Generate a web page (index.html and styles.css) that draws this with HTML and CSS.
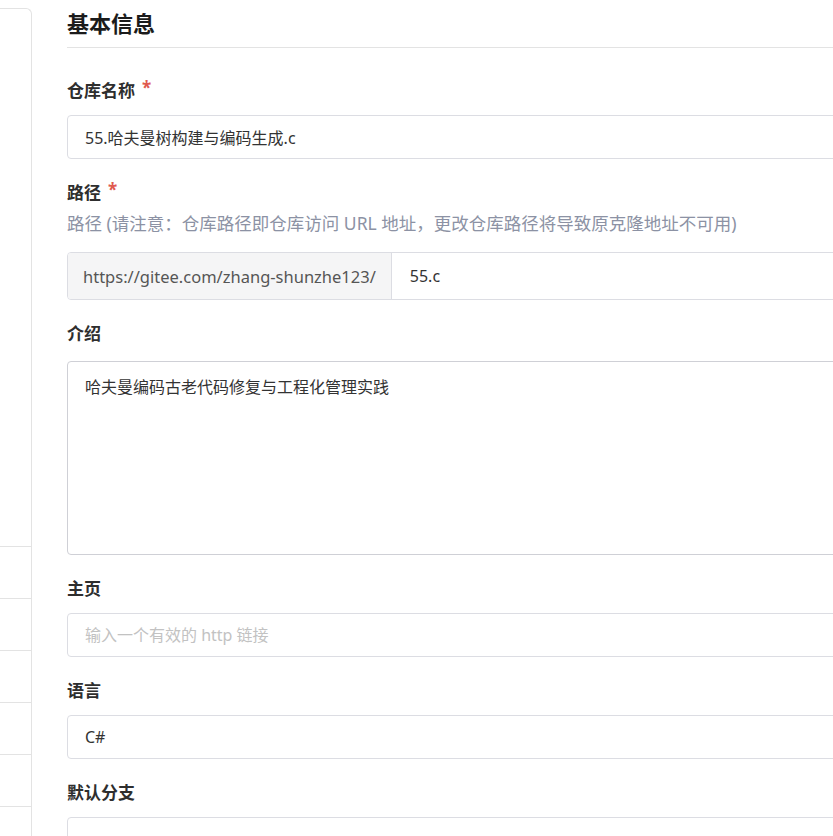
FILE: index.html
```html
<!doctype html>
<html lang="zh-CN">
<head>
    <meta charset="UTF-8">
    <meta name="viewport" content="width=device-width, initial-scale=1.0">
    <title>仓库设置</title>
    <link rel="stylesheet" href="styles.css">
</head>
<body>
    <div class="settings-layout">
        <!-- 左侧菜单, 只露出右边一小截 -->
        <div class="settings-menu">
            <div class="settings-menu-head"></div>
            <div class="settings-menu-item"></div>
            <div class="settings-menu-item"></div>
            <div class="settings-menu-item"></div>
            <div class="settings-menu-item"></div>
            <div class="settings-menu-item"></div>
            <div class="settings-menu-item"></div>
        </div>

        <!-- 表单 -->
        <div class="settings-main">
            <h2 class="settings-title">基本信息</h2>

            <div class="form-field">
                <div class="form-label">仓库名称<span class="form-required">*</span></div>
                <input class="form-input" type="text" value="55.哈夫曼树构建与编码生成.c">
            </div>

            <div class="form-field">
                <div class="form-label form-label-tight">路径<span class="form-required">*</span></div>
                <div class="form-help">路径 (请注意：仓库路径即仓库访问 URL 地址，更改仓库路径将导致原克隆地址不可用)</div>
                <div class="form-input-group">
                    <div class="form-input-prefix">https://gitee.com/zhang-shunzhe123/</div>
                    <input class="form-input form-input-plain" type="text" value="55.c">
                </div>
            </div>

            <div class="form-field">
                <div class="form-label form-label-loose">介绍</div>
                <textarea class="form-textarea">哈夫曼编码古老代码修复与工程化管理实践</textarea>
            </div>

            <div class="form-field">
                <div class="form-label">主页</div>
                <input class="form-input" type="text" placeholder="输入一个有效的 http 链接">
            </div>

            <div class="form-field">
                <div class="form-label">语言</div>
                <input class="form-input" type="text" value="C#">
            </div>

            <div class="form-field">
                <div class="form-label">默认分支</div>
                <input class="form-input form-input-large" type="text" value="master">
            </div>
        </div>
    </div>
</body>
</html>
```

FILE: styles.css
```css
html,
body {
    margin: 0;
    padding: 0;
    background-color: #fff;
}

body {
    font-family: "Noto Sans", "Noto Sans CJK SC", sans-serif;
    color: #333;
    overflow: hidden;
}

.settings-layout {
    display: flex;
    align-items: flex-start;
    padding-top: 8px;
}

/* 菜单左边超出屏幕 */
.settings-menu {
    flex: 0 0 200px;
    margin-left: -168px;
    border: 1px solid #e3e3e3;
    border-bottom: none;
    border-radius: 6px 6px 0 0;
    box-sizing: border-box;
}

.settings-menu-head {
    height: 537px;
}

.settings-menu-item {
    height: 51px;
    border-top: 1px solid #e3e3e3;
}

.settings-main {
    flex: 0 0 900px;
    margin-left: 35px;
}

.settings-title {
    margin: 0 0 33px;
    padding-bottom: 9px;
    font-size: 22px;
    line-height: 30px;
    font-weight: 700;
    color: #1b1b1b;
    border-bottom: 1px solid #e3e3e3;
}

.form-field {
    margin-bottom: 24px;
}

.form-label {
    margin-bottom: 14px;
    font-size: 17px;
    line-height: 20px;
    font-weight: 700;
    color: #2e2e2e;
}

.form-label-tight {
    margin-bottom: 8px;
}

/* textarea 比普通输入框离标签远一点 */
.form-label-loose {
    margin-bottom: 17px;
}

.form-required {
    margin-left: 7px;
    font-size: 17px;
    line-height: 14px;
    vertical-align: top;
    color: #e05a4f;
}

.form-help {
    margin-bottom: 17px;
    font-size: 17.5px;
    line-height: 24px;
    color: #8c92a4;
    white-space: nowrap;
}

.form-input {
    display: block;
    width: 100%;
    height: 44px;
    margin: 0;
    padding: 0 17px;
    font-family: inherit;
    font-size: 16px;
    color: #333;
    border: 1px solid #dcdde3;
    border-radius: 4px;
    box-sizing: border-box;
    outline: none;
    background: #fff;
}

.form-input::placeholder {
    color: #c2c2c2;
}

.form-input-large {
    height: 48px;
}

.form-input-group {
    display: flex;
    height: 48px;
    border: 1px solid #dcdde3;
    border-radius: 4px;
    box-sizing: border-box;
    overflow: hidden;
}

.form-input-prefix {
    display: flex;
    align-items: center;
    padding: 0 15px;
    font-size: 16.5px;
    color: #555;
    white-space: nowrap;
    background-color: #f5f5f6;
    border-right: 1px solid #dcdde3;
}

.form-input-plain {
    flex: 1;
    height: 100%;
    padding-left: 18px;
    border: none;
    border-radius: 0;
}

.form-textarea {
    display: block;
    width: 100%;
    height: 194px;
    margin: 0;
    padding: 14px 17px;
    font-family: inherit;
    font-size: 16px;
    line-height: 22px;
    color: #333;
    border: 1px solid #cfd0d6;
    border-radius: 4px;
    box-sizing: border-box;
    resize: none;
    outline: none;
}
```
